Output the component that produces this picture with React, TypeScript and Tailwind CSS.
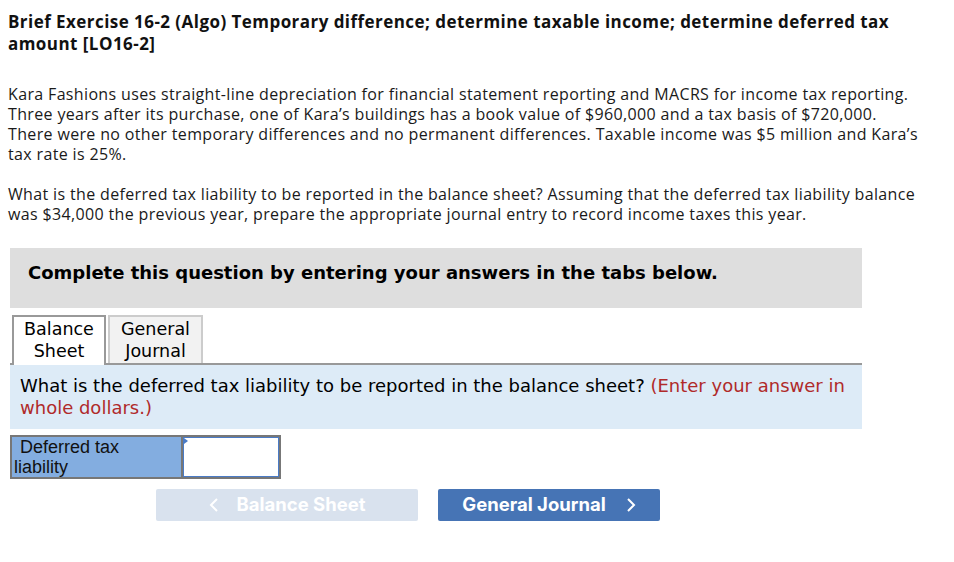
export default function App() {
  return (
    <div className="w-[954px] h-[562px] bg-white text-[#1a1a1a] font-['Open_Sans',sans-serif]">
      {/* Title */}
      <h1 className="pl-2 pt-[11px] text-[17px] tracking-[0.45px] leading-[22px] font-bold text-[#111]">
        Brief Exercise 16-2 (Algo) Temporary difference; determine taxable income; determine deferred tax
        <br />
        amount [LO16-2]
      </h1>

      {/* Problem text */}
      <p className="pl-2 pr-2 mt-[29px] text-[16px] tracking-[0.35px] leading-[20px]">
        Kara Fashions uses straight-line depreciation for financial statement reporting and MACRS for income tax reporting.
        <br />
        Three years after its purchase, one of Kara’s buildings has a book value of $960,000 and a tax basis of $720,000.
        <br />
        There were no other temporary differences and no permanent differences. Taxable income was $5 million and Kara’s
        <br />
        tax rate is 25%.
      </p>
      <p className="pl-2 pr-2 mt-[20px] text-[16px] tracking-[0.35px] leading-[20px]">
        What is the deferred tax liability to be reported in the balance sheet? Assuming that the deferred tax liability balance
        <br />
        was $34,000 the previous year, prepare the appropriate journal entry to record income taxes this year.
      </p>

      {/* Instruction box */}
      <div className="ml-[10px] mt-[24px] w-[852px] h-[60px] bg-[#dedede] pl-[18px] pt-[13px]">
        <span className="font-['DejaVu_Sans',sans-serif] font-bold text-[18px] leading-[22px] text-black">
          Complete this question by entering your answers in the tabs below.
        </span>
      </div>

      {/* Tabs */}
      <div className="ml-[10px] mt-[7px] w-[852px] flex items-end gap-[2px] pl-[2px] border-b-2 border-[#999] font-['DejaVu_Sans',sans-serif] text-[17.5px] leading-[22px] text-black">
        <div className="w-[94px] h-[50px] bg-white border-2 border-b-0 border-[#999] flex flex-col items-center justify-center -mb-[2px] pb-[2px]">
          <span>Balance</span>
          <span>Sheet</span>
        </div>
        <div className="w-[95px] h-[48px] bg-[#f2f2f2] border-2 border-b-0 border-[#ccc] flex flex-col items-center justify-center">
          <span>General</span>
          <span>Journal</span>
        </div>
      </div>

      {/* Question */}
      <div className="ml-[10px] w-[852px] h-[64px] bg-[#ddebf7] px-[10px] pt-[10px] font-['DejaVu_Sans',sans-serif] text-[18px] leading-[22px] text-black">
        <div>
          What is the deferred tax liability to be reported in the balance sheet?{" "}
          <span className="text-[#b02a2a]">(Enter your answer in</span>
        </div>
        <div className="text-[#b02a2a]">whole dollars.)</div>
      </div>

      {/* Answer table */}
      <div className="ml-[10px] mt-[6px] flex w-[271px] h-[44px] border-2 border-[#777] bg-[#777] gap-[2px] font-['Liberation_Sans',sans-serif] text-[18px] leading-[20px] text-[#111]">
        <div className="w-[169px] bg-[#83ade0] pl-[2px]">
          <div className="pl-[6px]">Deferred tax</div>
          <div>liability</div>
        </div>
        <div className="relative flex-1 bg-white border border-[#4a7bc6]">
          <span className="absolute left-0 top-0 w-0 h-0 border-t-[3px] border-b-[3px] border-l-[4px] border-t-transparent border-b-transparent border-l-[#4a7bc6]" />
        </div>
      </div>

      {/* Navigation */}
      <div className="mt-[10px] flex pl-[156px] gap-[20px] font-['Inter',sans-serif] font-bold text-[18.5px]">
        <div className="w-[262px] h-[32px] rounded-[2px] bg-[#d9e2ee] text-white flex items-center justify-center gap-[18px]">
          <svg width="10" height="16" viewBox="0 0 10 16" fill="none" stroke="white" strokeWidth="2">
            <path d="M8 2 L2 8 L8 14" />
          </svg>
          <span>Balance Sheet</span>
        </div>
        <div className="w-[222px] h-[32px] rounded-[2px] bg-[#4674b5] text-white flex items-center justify-center gap-[20px]">
          <span>General Journal</span>
          <svg width="10" height="16" viewBox="0 0 10 16" fill="none" stroke="white" strokeWidth="2">
            <path d="M2 2 L8 8 L2 14" />
          </svg>
        </div>
      </div>
    </div>
  );
}
